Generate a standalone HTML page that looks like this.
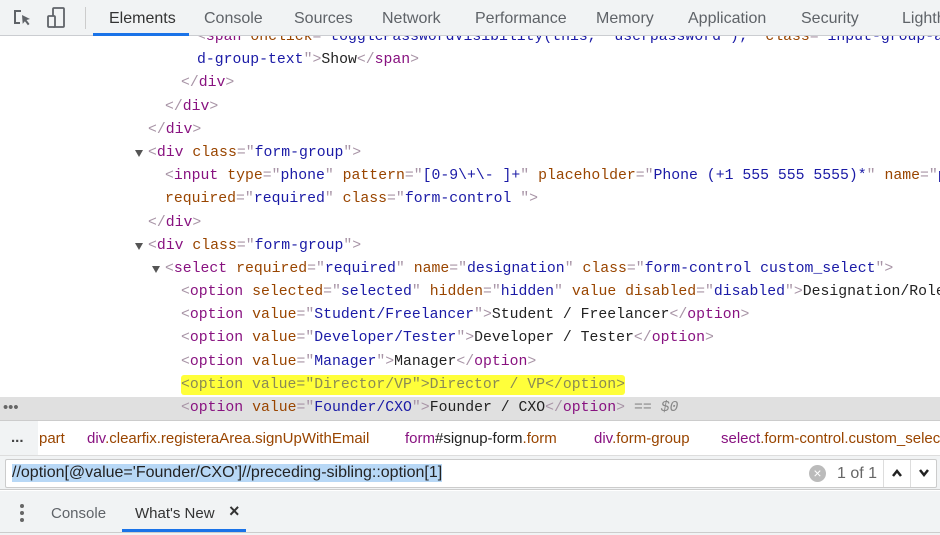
<!DOCTYPE html>
<html><head><meta charset="utf-8"><style>
*{margin:0;padding:0;box-sizing:border-box}
body{width:940px;height:535px;overflow:hidden;background:#fff;position:relative;font-family:"Liberation Sans",sans-serif}
.tb{position:absolute;left:0;top:0;width:940px;height:36px;background:#f1f3f4;border-bottom:1px solid #cbcdd1;z-index:2}
.tab{position:absolute;top:10px;font-size:16px;color:#5f6368;white-space:nowrap}
.code{position:absolute;left:0;top:26px;width:940px;font-family:"Liberation Mono",monospace;font-size:14.8px;line-height:23.2px;z-index:1}
.r{position:relative;height:23.2px;white-space:pre;overflow:hidden}
.t{color:#881280}.a{color:#994500}.v{color:#1a1aa6}.b{color:#a894a6}.x{color:#222}
.arr{position:absolute;width:0;height:0;border-left:4px solid transparent;border-right:4px solid transparent;border-top:7px solid #555;top:8px}
.bc{position:absolute;left:0;top:420px;width:940px;height:36px;border-top:1px solid #ccc;border-bottom:1px solid #ddd;background:#fff;font-size:15px;z-index:2}
.bc>span{position:absolute;top:9px;white-space:nowrap}
</style></head><body>
<div class="tb">
<svg style="position:absolute;left:12px;top:8px" width="22" height="20" viewBox="0 0 22 20"><path d="M9 3H3v12h5" fill="none" stroke="#5f6368" stroke-width="2"/><path d="M10 7l8 4-3.5 1 3 4-1.6 1.2-3-4-2.2 2.7z" fill="#5f6368"/></svg>
<svg style="position:absolute;left:46px;top:6px" width="24" height="24" viewBox="0 0 24 24"><rect x="7" y="2" width="11" height="19" rx="1" fill="none" stroke="#5f6368" stroke-width="1.8"/><rect x="2" y="10" width="7" height="11" rx="1" fill="#f1f3f4" stroke="#5f6368" stroke-width="1.8"/></svg>
<div style="position:absolute;left:85px;top:7px;width:1px;height:22px;background:#ccc"></div>
<span class="tab" style="left:109px;color:#333">Elements</span>
<div style="position:absolute;left:93px;top:33px;width:96px;height:3px;background:#1a73e8"></div>
<span class="tab" style="left:204px">Console</span>
<span class="tab" style="left:294px">Sources</span>
<span class="tab" style="left:382px">Network</span>
<span class="tab" style="left:475px">Performance</span>
<span class="tab" style="left:596px">Memory</span>
<span class="tab" style="left:688px">Application</span>
<span class="tab" style="left:801px">Security</span>
<span class="tab" style="left:902px">Lighthouse</span>
</div>
<div class="code"><div class="r" style="padding-left:197px"><span class="b">&lt;</span><span class="t">span</span> <span class="a">onclick</span><span class="b">="</span><span class="v">togglePasswordVisibility(this, 'userpassword');</span><span class="b">"</span> <span class="a">class</span><span class="b">="</span><span class="v">input-group-addon</span></div><div class="r" style="padding-left:197px"><span class="v">d-group-text</span><span class="b">"&gt;</span><span class="x">Show</span><span class="b">&lt;/</span><span class="t">span</span><span class="b">&gt;</span></div><div class="r" style="padding-left:181px"><span class="b">&lt;/</span><span class="t">div</span><span class="b">&gt;</span></div><div class="r" style="padding-left:165px"><span class="b">&lt;/</span><span class="t">div</span><span class="b">&gt;</span></div><div class="r" style="padding-left:148px"><span class="b">&lt;/</span><span class="t">div</span><span class="b">&gt;</span></div><div class="r" style="padding-left:148px"><i class="arr" style="left:135px"></i><span class="b">&lt;</span><span class="t">div</span> <span class="a">class</span><span class="b">="</span><span class="v">form-group</span><span class="b">"&gt;</span></div><div class="r" style="padding-left:165px"><span class="b">&lt;</span><span class="t">input</span> <span class="a">type</span><span class="b">="</span><span class="v">phone</span><span class="b">"</span> <span class="a">pattern</span><span class="b">="</span><span class="v">[0-9\+\- ]+</span><span class="b">"</span> <span class="a">placeholder</span><span class="b">="</span><span class="v">Phone (+1 555 555 5555)*</span><span class="b">"</span> <span class="a">name</span><span class="b">="</span><span class="v">phone</span></div><div class="r" style="padding-left:165px"><span class="a">required</span><span class="b">="</span><span class="v">required</span><span class="b">"</span> <span class="a">class</span><span class="b">="</span><span class="v">form-control </span><span class="b">"&gt;</span></div><div class="r" style="padding-left:148px"><span class="b">&lt;/</span><span class="t">div</span><span class="b">&gt;</span></div><div class="r" style="padding-left:148px"><i class="arr" style="left:135px"></i><span class="b">&lt;</span><span class="t">div</span> <span class="a">class</span><span class="b">="</span><span class="v">form-group</span><span class="b">"&gt;</span></div><div class="r" style="padding-left:165px"><i class="arr" style="left:152px"></i><span class="b">&lt;</span><span class="t">select</span> <span class="a">required</span><span class="b">="</span><span class="v">required</span><span class="b">"</span> <span class="a">name</span><span class="b">="</span><span class="v">designation</span><span class="b">"</span> <span class="a">class</span><span class="b">="</span><span class="v">form-control custom_select</span><span class="b">"&gt;</span></div><div class="r" style="padding-left:181px"><span class="b">&lt;</span><span class="t">option</span> <span class="a">selected</span><span class="b">="</span><span class="v">selected</span><span class="b">"</span> <span class="a">hidden</span><span class="b">="</span><span class="v">hidden</span><span class="b">"</span> <span class="a">value</span> <span class="a">disabled</span><span class="b">="</span><span class="v">disabled</span><span class="b">"&gt;</span><span class="x">Designation/Role</span></div><div class="r" style="padding-left:181px"><span class="b">&lt;</span><span class="t">option</span> <span class="a">value</span><span class="b">="</span><span class="v">Student/Freelancer</span><span class="b">"&gt;</span><span class="x">Student / Freelancer</span><span class="b">&lt;/</span><span class="t">option</span><span class="b">&gt;</span></div><div class="r" style="padding-left:181px"><span class="b">&lt;</span><span class="t">option</span> <span class="a">value</span><span class="b">="</span><span class="v">Developer/Tester</span><span class="b">"&gt;</span><span class="x">Developer / Tester</span><span class="b">&lt;/</span><span class="t">option</span><span class="b">&gt;</span></div><div class="r" style="padding-left:181px"><span class="b">&lt;</span><span class="t">option</span> <span class="a">value</span><span class="b">="</span><span class="v">Manager</span><span class="b">"&gt;</span><span class="x">Manager</span><span class="b">&lt;/</span><span class="t">option</span><span class="b">&gt;</span></div><div class="r" style="padding-left:181px"><span style="background:#ffff3a;border-radius:3px;padding:2px 0;color:#8a8a55">&lt;option value="Director/VP"&gt;Director / VP&lt;/option&gt;</span></div><div class="r" style="padding-left:181px;background:#e0e0e0"><span style="position:absolute;left:3px;top:0;color:#666;font-family:'Liberation Sans',sans-serif">•••</span><span class="b">&lt;</span><span class="t">option</span> <span class="a">value</span><span class="b">="</span><span class="v">Founder/CXO</span><span class="b">"&gt;</span><span class="x">Founder / CXO</span><span class="b">&lt;/</span><span class="t">option</span><span class="b">&gt;</span> <span style="color:#888">== <i>$0</i></span></div></div>
<div class="bc">
<span style="left:0;top:0;width:38px;height:34px;background:#f1f3f4;padding:8px 0 0 11px;font-weight:bold;color:#444">...</span>
<span style="left:39px;color:#994500">part</span>
<span style="left:87px;color:#881280">div<span style="color:#994500">.clearfix.registeraArea.signUpWithEmail</span></span>
<span style="left:405px;color:#881280">form<span style="color:#222">#signup-form</span><span style="color:#994500">.form</span></span>
<span style="left:594px;color:#881280">div<span style="color:#994500">.form-group</span></span>
<span style="left:721px;color:#881280">select<span style="color:#994500">.form-control.custom_select</span></span>
</div>
<div style="position:absolute;left:0;top:456px;width:940px;height:34px;background:#f1f3f4;border-bottom:1px solid #ccc;z-index:2">
<div style="position:absolute;left:5px;top:3px;width:932px;height:29px;background:#fff;border:1px solid #ccc;border-radius:2px">
<span style="position:absolute;left:6px;top:4px;font-size:16px;background:#b8d8f6;color:#222;white-space:nowrap">//option[@value='Founder/CXO']//preceding-sibling::option[1]</span>
<span style="position:absolute;left:803px;top:5px;width:17px;height:17px;border-radius:50%;background:#bbb;color:#fff;font-size:14px;line-height:17px;text-align:center">×</span>
<span style="position:absolute;left:831px;top:5px;font-size:16px;color:#666">1 of 1</span>
<div style="position:absolute;left:877px;top:0;width:1px;height:27px;background:#ddd"></div>
<div style="position:absolute;left:904px;top:0;width:1px;height:27px;background:#ddd"></div>
<svg style="position:absolute;left:885px;top:8px" width="12" height="10"><path d="M2 8L6 3l4 5" fill="none" stroke="#222" stroke-width="2.5"/></svg>
<svg style="position:absolute;left:912px;top:8px" width="12" height="10"><path d="M2 2l4 5 4-5" fill="none" stroke="#222" stroke-width="2.5"/></svg>
</div></div>
<div style="position:absolute;left:0;top:491px;width:940px;height:44px;background:#f1f3f4;z-index:2">
<span style="position:absolute;left:20px;top:13px;width:4px;height:4px;border-radius:2px;background:#666;box-shadow:0 7px 0 #666,0 14px 0 #666"></span>
<span style="position:absolute;left:51px;top:14px;font-size:15px;color:#5f6368">Console</span>
<span style="position:absolute;left:135px;top:14px;font-size:15px;color:#333">What's New</span>
<span style="position:absolute;left:229px;top:10px;font-size:18px;color:#333;font-weight:bold">×</span>
<div style="position:absolute;left:122px;top:38px;width:124px;height:3px;background:#1a73e8"></div>
<div style="position:absolute;left:0;top:41px;width:940px;height:1px;background:#ccc"></div>
</div>
</body></html>
